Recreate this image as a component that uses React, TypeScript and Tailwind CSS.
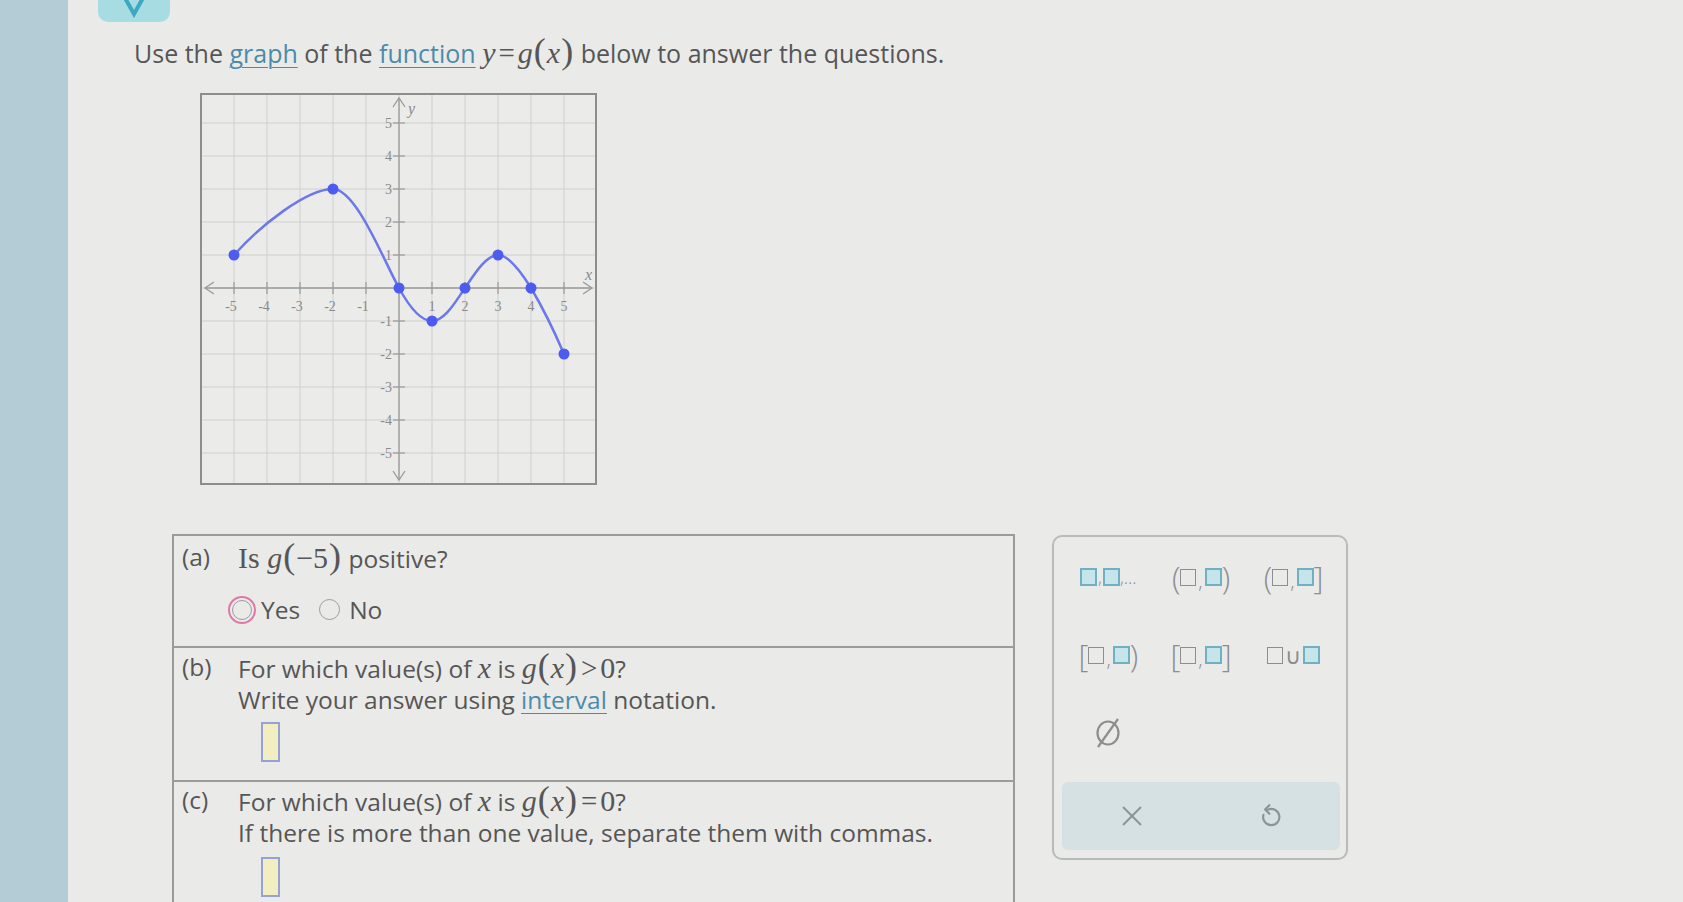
import React from "react";

const X = (x: number) => 197 + 33 * x;
const Y = (y: number) => 193 - 33 * y;
const P = (x: number, y: number) => `${X(x)},${Y(y)}`;

const curve = [
  `M${P(-5, 1)}`,
  `C${P(-4.2, 1.9)} ${P(-2.8, 3)} ${P(-2, 3)}`,
  `C${P(-1.3, 3)} ${P(-0.45, 0.8)} ${P(0, 0)}`,
  `C${P(0.3, -0.55)} ${P(0.65, -1)} ${P(1, -1)}`,
  `C${P(1.4, -1)} ${P(1.75, -0.35)} ${P(2, 0)}`,
  `C${P(2.3, 0.45)} ${P(2.65, 1)} ${P(3, 1)}`,
  `C${P(3.35, 1)} ${P(3.75, 0.4)} ${P(4, 0)}`,
  `C${P(4.3, -0.5)} ${P(4.7, -1.3)} ${P(5, -2)}`,
].join(" ");

const points: [number, number][] = [
  [-5, 1],
  [-2, 3],
  [0, 0],
  [1, -1],
  [2, 0],
  [3, 1],
  [4, 0],
  [5, -2],
];

const units = [-6, -5, -4, -3, -2, -1, 0, 1, 2, 3, 4, 5, 6];
const labels = [-5, -4, -3, -2, -1, 1, 2, 3, 4, 5];

function Graph() {
  return (
    <div className="w-[397px] h-[392px] border-2 border-[#8d8d8d] bg-[#ebebe9]">
      <svg width="393" height="388" className="block">
        {units.map((u) => (
          <line key={"v" + u} x1={X(u)} y1={0} x2={X(u)} y2={388} stroke="#cfcfcd" strokeWidth="1" />
        ))}
        {units.map((u) => (
          <line key={"h" + u} x1={0} y1={Y(u)} x2={393} y2={Y(u)} stroke="#cfcfcd" strokeWidth="1" />
        ))}
        {/* axes */}
        <line x1={3} y1={Y(0)} x2={390} y2={Y(0)} stroke="#9a9a9a" strokeWidth="1.3" />
        <line x1={X(0)} y1={3} x2={X(0)} y2={385} stroke="#9a9a9a" strokeWidth="1.3" />
        <polyline points={`12,${Y(0) - 6} 3,${Y(0)} 12,${Y(0) + 6}`} fill="none" stroke="#9a9a9a" strokeWidth="1.3" />
        <polyline points={`381,${Y(0) - 6} 390,${Y(0)} 381,${Y(0) + 6}`} fill="none" stroke="#9a9a9a" strokeWidth="1.3" />
        <polyline points={`${X(0) - 6},12 ${X(0)},3 ${X(0) + 6},12`} fill="none" stroke="#9a9a9a" strokeWidth="1.3" />
        <polyline points={`${X(0) - 6},376 ${X(0)},385 ${X(0) + 6},376`} fill="none" stroke="#9a9a9a" strokeWidth="1.3" />
        {labels.map((u) => (
          <g key={"t" + u}>
            <line x1={X(u)} y1={Y(0) - 6} x2={X(u)} y2={Y(0) + 6} stroke="#9a9a9a" strokeWidth="1.2" />
            <line x1={X(0) - 6} y1={Y(u)} x2={X(0) + 6} y2={Y(u)} stroke="#9a9a9a" strokeWidth="1.2" />
            <text
              x={X(u) - (u < 0 ? 3 : 0)}
              y={Y(0) + 23}
              textAnchor="middle"
              fontSize="14"
              fill="#8a8a8a"
              fontFamily="Liberation Serif, serif"
            >
              {u < 0 ? `-${-u}` : u}
            </text>
            <text
              x={X(0) - 7}
              y={Y(u) + 5}
              textAnchor="end"
              fontSize="14"
              fill="#8a8a8a"
              fontFamily="Liberation Serif, serif"
            >
              {u < 0 ? `-${-u}` : u}
            </text>
          </g>
        ))}
        <text x={383} y={Y(0) - 8} fontSize="16" fontStyle="italic" fill="#8a8a8a" fontFamily="Liberation Serif, serif">
          x
        </text>
        <text x={X(0) + 9} y={19} fontSize="16" fontStyle="italic" fill="#8a8a8a" fontFamily="Liberation Serif, serif">
          y
        </text>
        <path d={curve} fill="none" stroke="#6b77ea" strokeWidth="2.5" />
        {points.map(([x, y]) => (
          <circle key={x} cx={X(x)} cy={Y(y)} r="5.5" fill="#4c5cf0" />
        ))}
      </svg>
    </div>
  );
}

const serif = "font-['Liberation_Serif',serif]";

function Mi({ children }: { children: React.ReactNode }) {
  return <span className={`${serif} italic text-[30px]`}>{children}</span>;
}

function Mn({ children }: { children: React.ReactNode }) {
  return <span className={`${serif} text-[30px]`}>{children}</span>;
}

function Mo({ children }: { children: React.ReactNode }) {
  return <span className={`${serif} text-[29px] mx-[3px]`}>{children}</span>;
}

function Paren({ children }: { children: React.ReactNode }) {
  return <span className={`${serif} text-[36px] font-light mx-[1px]`}>{children}</span>;
}

function Box() {
  return <span className="inline-block w-[17px] h-[18px] border-2 border-[#6fb0c3] bg-[#c5e5eb]" />;
}

function GrayBox() {
  return <span className="inline-block w-[16px] h-[17px] border-[1.5px] border-[#8e8e8e]" />;
}

function Comma() {
  return <span className="text-[20px] self-end pb-[6px] mx-[2px]">,</span>;
}

function Tmpl({ children }: { children: React.ReactNode }) {
  return (
    <div className="flex items-center justify-center h-[40px] text-[#8d8d8d] text-[31px] font-light leading-none">
      {children}
    </div>
  );
}

function AnswerBox() {
  return <div className="w-[19px] h-[40px] border-2 border-[#97a2d4] bg-[#f2eec2]" />;
}

function Link({ children }: { children: React.ReactNode }) {
  return <span className="text-[#4c8aab] underline underline-offset-4 decoration-1">{children}</span>;
}

export default function App() {
  return (
    <div className="w-[1683px] h-[902px] flex overflow-hidden font-['Open_Sans',sans-serif] text-[#565656]">
      <div className="w-[68px] shrink-0 bg-[#b3ccd5]" />
      <div className="flex-1 bg-[#eaeae8] pl-[66px]">
        <div className="ml-[-36px] w-[72px] h-[22px] rounded-b-[10px] bg-[#a7dce2] flex justify-center">
          <svg width="26" height="18" viewBox="0 0 26 18">
            <polyline points="4,-2 13,14 22,-2" fill="none" stroke="#3ea8c0" strokeWidth="4" />
          </svg>
        </div>
        <div className="mt-[14px] h-[31px] text-[25px] leading-[31px] whitespace-nowrap">
          Use the <Link>graph</Link> of the <Link>function</Link> <Mi>y</Mi>
          <Mo>=</Mo>
          <Mi>g</Mi>
          <Paren>(</Paren>
          <Mi>x</Mi>
          <Paren>)</Paren> below to answer the questions.
        </div>
        <div className="mt-[26px] ml-[66px]">
          <Graph />
        </div>
        <div className="mt-[49px] ml-[38px] flex items-start">
          <div className="w-[843px] h-[380px] border-2 border-b-0 border-[#9b9b9b] text-[24.5px] leading-[31px]">
            <div className="h-[112px] border-b-2 border-[#9b9b9b] pl-[8px] pt-[5px]">
              <div className="flex">
                <span className="w-[56px]">(a)</span>
                <span>
                  <Mn>Is </Mn>
                  <Mi>g</Mi>
                  <Paren>(</Paren>
                  <Mn>−5</Mn>
                  <Paren>)</Paren> positive?
                </span>
              </div>
              <div className="mt-[20px] ml-[46px] flex items-center">
                <span className="w-[28px] h-[28px] rounded-full border-2 border-[#de78a6] flex items-center justify-center">
                  <span className="w-[20px] h-[20px] rounded-full border-[1.5px] border-[#9c9c9c]" />
                </span>
                <span className="ml-[5px]">Yes</span>
                <span className="ml-[19px] w-[21px] h-[21px] rounded-full border-[1.5px] border-[#9c9c9c]" />
                <span className="ml-[9px]">No</span>
              </div>
            </div>
            <div className="h-[134px] border-b-2 border-[#9b9b9b] pl-[8px] pt-[3px]">
              <div className="flex">
                <span className="w-[56px]">(b)</span>
                <div>
                  <div>
                    For which value(s) of <Mi>x</Mi> is <Mi>g</Mi>
                    <Paren>(</Paren>
                    <Mi>x</Mi>
                    <Paren>)</Paren>
                    <Mo>&gt;</Mo>
                    <Mn>0</Mn>?
                  </div>
                  <div>
                    Write your answer using <Link>interval</Link> notation.
                  </div>
                  <div className="mt-[7px] ml-[23px]">
                    <AnswerBox />
                  </div>
                </div>
              </div>
            </div>
            <div className="pl-[8px] pt-[2px]">
              <div className="flex">
                <span className="w-[56px]">(c)</span>
                <div>
                  <div>
                    For which value(s) of <Mi>x</Mi> is <Mi>g</Mi>
                    <Paren>(</Paren>
                    <Mi>x</Mi>
                    <Paren>)</Paren>
                    <Mo>=</Mo>
                    <Mn>0</Mn>?
                  </div>
                  <div>If there is more than one value, separate them with commas.</div>
                  <div className="mt-[9px] ml-[23px]">
                    <AnswerBox />
                  </div>
                </div>
              </div>
            </div>
          </div>
          <div className="ml-[37px] mt-[1px] w-[296px] h-[325px] border-2 border-[#b8bbbc] rounded-[10px] flex flex-col pl-[8px] pr-[6px] pt-[20px] pb-[8px]">
            <div className="grid grid-cols-3 gap-y-[38px]">
              <Tmpl>
                <div className="flex items-end">
                  <Box />
                  <span className="text-[18px] leading-none mx-[1px]">,</span>
                  <Box />
                  <span className="text-[18px] leading-none">,...</span>
                </div>
              </Tmpl>
              <Tmpl>
                (<GrayBox />
                <Comma />
                <Box />)
              </Tmpl>
              <Tmpl>
                (<GrayBox />
                <Comma />
                <Box />]
              </Tmpl>
              <Tmpl>
                [<GrayBox />
                <Comma />
                <Box />)
              </Tmpl>
              <Tmpl>
                [<GrayBox />
                <Comma />
                <Box />]
              </Tmpl>
              <Tmpl>
                <GrayBox />
                <span className="text-[22px] mx-[2px]">∪</span>
                <Box />
              </Tmpl>
              <Tmpl>
                <svg width="32" height="32" viewBox="0 0 32 32">
                  <ellipse cx="16" cy="16" rx="10.5" ry="11.5" fill="none" stroke="#8d8d8d" strokeWidth="2.2" />
                  <line x1="6" y1="30" x2="26" y2="2" stroke="#8d8d8d" strokeWidth="2.2" />
                </svg>
              </Tmpl>
            </div>
            <div className="mt-auto h-[68px] rounded-[6px] bg-[#d5e1e3] grid grid-cols-2 items-center">
              <div className="flex justify-center">
                <svg width="22" height="22" viewBox="0 0 22 22">
                  <line x1="2" y1="2" x2="20" y2="20" stroke="#8a9598" strokeWidth="2" />
                  <line x1="20" y1="2" x2="2" y2="20" stroke="#8a9598" strokeWidth="2" />
                </svg>
              </div>
              <div className="flex justify-center">
                <svg width="26" height="26" viewBox="0 0 24 24" fill="none" stroke="#8a9598" strokeWidth="2" strokeLinecap="round" strokeLinejoin="round">
                  <path d="M9 6.2 A7.5 7.5 0 1 1 5 11" />
                  <polyline points="10.5,2 6.5,6 10.5,10" />
                </svg>
              </div>
            </div>
          </div>
        </div>
      </div>
    </div>
  );
}
